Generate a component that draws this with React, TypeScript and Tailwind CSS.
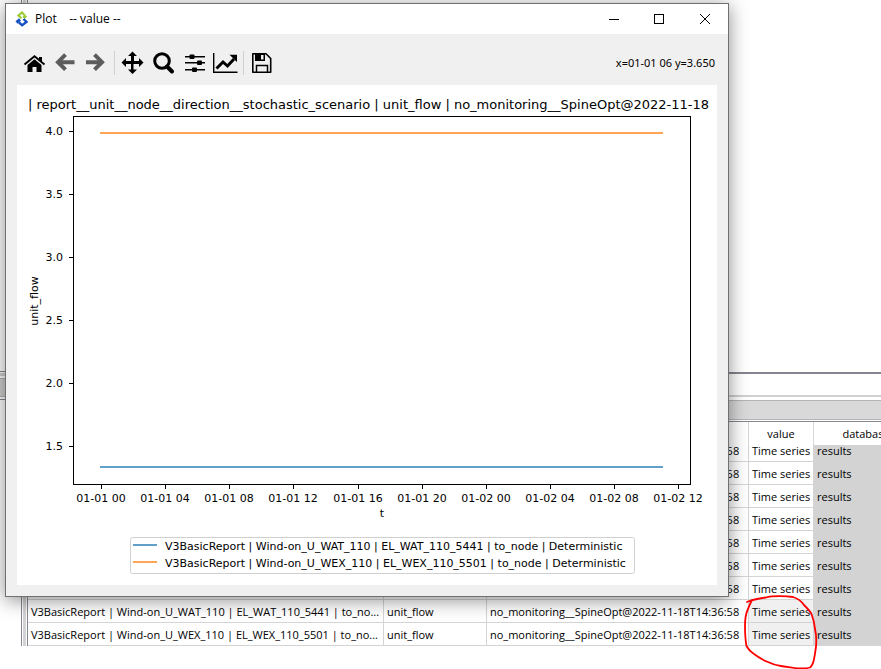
import React from 'react';

const rowCount = 9;

const visibleNames: Record<number, string> = {
  7: 'V3BasicReport | Wind-on_U_WAT_110 | EL_WAT_110_5441 | to_no...',
  8: 'V3BasicReport | Wind-on_U_WEX_110 | EL_WEX_110_5501 | to_no...',
};

const xTicks = [
  { x: 84, label: '01-01 00' },
  { x: 148, label: '01-01 04' },
  { x: 212, label: '01-01 08' },
  { x: 276, label: '01-01 12' },
  { x: 341, label: '01-01 16' },
  { x: 405, label: '01-01 20' },
  { x: 469, label: '01-02 00' },
  { x: 533, label: '01-02 04' },
  { x: 597, label: '01-02 08' },
  { x: 661, label: '01-02 12' },
];

const yTicks = [
  { y: 46, label: '4.0' },
  { y: 109, label: '3.5' },
  { y: 172, label: '3.0' },
  { y: 235, label: '2.5' },
  { y: 298, label: '2.0' },
  { y: 361, label: '1.5' },
];

const ToolButton: React.FC<{ label: string; disabled?: boolean; children: React.ReactNode }> = ({
  label,
  disabled,
  children,
}) => (
  <button
    type="button"
    aria-label={label}
    disabled={disabled}
    className="flex h-8 w-[31px] items-center justify-center text-black disabled:text-[#5c5c5c]"
  >
    <svg width="25" height="24" viewBox="0 0 25 24" fill="currentColor">
      {children}
    </svg>
  </button>
);

const Toolbar = () => (
  <div className="flex h-[51px] items-center bg-[#f0f0f0] pt-[6px] pr-[13px] pl-[13px]">
    <ToolButton label="Home">
      <path d="M2.5 13.5 12.5 5.2l10 8.3" fill="none" stroke="currentColor" strokeWidth="1.9" />
      <path d="M17 6h3v6l-3-2.5z" />
      <path d="M5.5 14 12.5 8.2l7 5.8v7h-5v-5h-4v5h-5z" />
    </ToolButton>
    <ToolButton label="Back" disabled>
      <path d="M12.5 3.7 5 11.2l7.5 7.5M5.5 11.2H21.5" fill="none" stroke="currentColor" strokeWidth="4" />
    </ToolButton>
    <ToolButton label="Forward" disabled>
      <path d="M10.5 3.7l7.5 7.5-7.5 7.5M17.5 11.2H2" fill="none" stroke="currentColor" strokeWidth="4" />
    </ToolButton>
    <div className="flex h-6 w-[5px] justify-center">
      <div className="w-px bg-[#d0d0d0]" />
    </div>
    <ToolButton label="Pan">
      <path d="M12.5 .5l4.500 4.500h-3v5h5V7L23.500 11.500 19 16v-3h-5.500v5.500h3.500L12.500 23 8 18.500h3V13H6v3L1.500 11.500 6 7v3h5V5H8z" />
    </ToolButton>
    <ToolButton label="Zoom">
      <circle cx="11" cy="10" r="7.3" fill="none" stroke="currentColor" strokeWidth="3" />
      <path d="M16 15.500l5 5" stroke="currentColor" strokeWidth="4" strokeLinecap="round" />
    </ToolButton>
    <ToolButton label="Subplots">
      <path d="M3 5h20v1.500H3zM3 11h20v1.500H3zM3 18h20v1.500H3z" />
      <rect x="7.500" y="3.500" width="5" height="4.500" rx="1" />
      <rect x="15" y="9.500" width="5" height="4.500" rx="1" />
      <rect x="10" y="16.500" width="5" height="4.500" rx="1" />
    </ToolButton>
    <ToolButton label="Customize">
      <path d="M.7 2v19.200H24.500" fill="none" stroke="currentColor" strokeWidth="1.4" />
      <path d="M3.500 17.500l6.500-6.500 4.500 4 6.500-7" fill="none" stroke="currentColor" strokeWidth="3" />
      <path d="M16.500 3.800H24V11z" />
    </ToolButton>
    <div className="flex h-6 w-[5px] justify-center">
      <div className="w-px bg-[#d0d0d0]" />
    </div>
    <ToolButton label="Save">
      <path
        d="M3.800 2.800H17l4.700 4.700v13.700H3.800z"
        fill="none"
        stroke="currentColor"
        strokeWidth="1.6"
        strokeLinejoin="round"
      />
      <path d="M6 3h10v7H6zM12 4v4.500h2.500V4z" fillRule="evenodd" />
      <path d="M7.500 21v-6.500h11V21" fill="none" stroke="currentColor" strokeWidth="1.5" />
    </ToolButton>
    <span className="ml-auto font-['Noto_Sans',sans-serif] text-[11px] leading-4 text-black">x=01-01 06 y=3.650</span>
  </div>
);

const Plot = () => (
  <svg
    viewBox="0 0 700 500"
    className="block w-full bg-white font-['DejaVu_Sans',sans-serif] text-[11px]"
    role="img"
    aria-label="unit_flow over t"
  >
    <text x="11" y="24" fontSize="13">
      | report__unit__node__direction__stochastic_scenario | unit_flow | no_monitoring__SpineOpt@2022-11-18
    </text>
    <rect x="56.5" y="31.5" width="617" height="368" fill="none" stroke="#000" />
    <path d="M83 48h563" stroke="#ffa556" strokeWidth="2" />
    <path d="M83 382h563" stroke="#629fca" strokeWidth="2" />
    {yTicks.map((t) => (
      <g key={t.label}>
        <path d={`M52 ${t.y + 0.5}h4`} stroke="#000" />
        <text x="46" y={t.y + 4} textAnchor="end">
          {t.label}
        </text>
      </g>
    ))}
    {xTicks.map((t) => (
      <g key={t.label}>
        <path d={`M${t.x + 0.5} 400v4`} stroke="#000" />
        <text x={t.x} y="417" textAnchor="middle">
          {t.label}
        </text>
      </g>
    ))}
    <text x="365" y="432" textAnchor="middle">
      t
    </text>
    <text transform="translate(21 216) rotate(-90)" textAnchor="middle">
      unit_flow
    </text>
    <rect x="113.5" y="452.5" width="504" height="36" rx="2" fill="#fff" stroke="#d0d0d0" />
    <path d="M116 460h24" stroke="#629fca" strokeWidth="2" />
    <path d="M116 477h24" stroke="#ffa556" strokeWidth="2" />
    <text x="148" y="465">
      V3BasicReport | Wind-on_U_WAT_110 | EL_WAT_110_5441 | to_node | Deterministic
    </text>
    <text x="148" y="482">
      V3BasicReport | Wind-on_U_WEX_110 | EL_WEX_110_5501 | to_node | Deterministic
    </text>
  </svg>
);

const TitleBar = () => (
  <div className="flex h-[30px] items-center bg-white pl-[9px]">
    <svg width="14" height="18" viewBox="0 0 14 18">
      <g fill="none" stroke="#9acb34" strokeWidth="2.2">
        <path d="M9.500 5L7 2.500 3.500 5.500 6.500 8.200" />
        <path d="M8.500 8L11 5.500" strokeWidth="3" />
      </g>
      <g fill="none" stroke="#1450c4" strokeWidth="2.4">
        <path d="M8.500 9l3 3-4.300 3.300-3.200-2.800" />
        <path d="M1.500 12.500L5 9.500" strokeWidth="3" />
      </g>
    </svg>
    <span className="ml-[6px] text-xs whitespace-pre">Plot    -- value --</span>
    <div className="ml-auto flex">
      <button type="button" aria-label="Minimize" className="flex h-[30px] w-[44px] items-center justify-center">
        <svg width="10" height="10" viewBox="0 0 10 10" stroke="#000">
          <path d="M0 5.500h10" />
        </svg>
      </button>
      <button type="button" aria-label="Maximize" className="flex h-[30px] w-[46px] items-center justify-center">
        <svg width="10" height="10" viewBox="0 0 10 10" fill="none" stroke="#000">
          <rect x=".5" y=".5" width="9" height="9" />
        </svg>
      </button>
      <button type="button" aria-label="Close" className="flex h-[30px] w-[46px] items-center justify-center">
        <svg width="10" height="10" viewBox="0 0 10 10" stroke="#000">
          <path d="M0 0l10 10M10 0L0 10" />
        </svg>
      </button>
    </div>
  </div>
);

const PlotWindow = () => (
  <div className="absolute top-[3px] left-[5px] w-[724px] border border-[#707070] bg-[#f0f0f0] shadow-[0_3px_18px_rgba(0,0,0,0.45)]">
    <TitleBar />
    <Toolbar />
    <div className="px-[11px] pb-[11px]">
      <Plot />
    </div>
  </div>
);

const ResultsTable = () => (
  <div className="overflow-hidden">
    <table className="w-[890px] table-fixed border-separate border-spacing-0 text-[11px] leading-4">
      <colgroup>
        <col className="w-[356px]" />
        <col className="w-[103px]" />
        <col className="w-[262px]" />
        <col className="w-[65px]" />
        <col className="w-[104px]" />
      </colgroup>
      <thead>
        <tr className="h-[23px]">
          <th className="border-r border-[#d8d8d8]" />
          <th className="border-r border-[#d8d8d8]" />
          <th className="border-r border-[#d8d8d8]" />
          <th className="border-r border-[#d8d8d8] p-0 font-normal">value</th>
          <th className="p-0 font-normal">database</th>
        </tr>
      </thead>
      <tbody>
        {Array.from({ length: rowCount }, (_, i) => {
          const height = i === 0 ? 'h-[17px] align-top leading-3' : 'h-[23px] pt-[2px]';
          const cell = `${height} overflow-hidden border-r border-b border-[#d4d4d4] pl-[3px] whitespace-nowrap`;
          return (
            <tr key={i}>
              <td className={cell}>{visibleNames[i]}</td>
              <td className={cell}>{visibleNames[i] && 'unit_flow'}</td>
              <td className={cell}>no_monitoring__SpineOpt@2022-11-18T14:36:58</td>
              <td className={i > 6 ? `${cell} bg-[#f0f0f0]` : cell}>Time series</td>
              <td className={`${height} border-b border-[#d4d4d4] bg-[#d3d3d3] pl-[3px]`}>results</td>
            </tr>
          );
        })}
      </tbody>
    </table>
  </div>
);

const Splitter = () => (
  <div className="w-[7px] shrink-0 border-x border-[#828790] bg-white px-px">
    <div className="h-full bg-[#d3d3d3]" />
  </div>
);

export default function App() {
  return (
    <div className="relative min-h-screen overflow-hidden bg-white font-['Open_Sans','Noto_Sans',sans-serif] text-black">
      <div className="flex">
        <div className="w-[21px] shrink-0">
          <div className="h-[371px]" />
          <div className="h-[5px] border-t border-[#828790] pt-px">
            <div className="h-[3px] bg-[#d0d0d0]" />
          </div>
          <div className="mt-[2px] h-[19px] border-y border-[#b0b0b0] bg-[#d0d0d0]" />
          <div className="mt-[2px] border-t border-[#828790]" />
        </div>
        <div className="min-w-0 flex-1">
          <div className="flex h-[372px]">
            <Splitter />
          </div>
          <div className="h-[25px] border-t-2 border-b-2 border-t-[#85858f] border-b-[#d0d0d0]" />
          <div className="mt-[3px] h-5 border-y border-[#b4b4b4] bg-[#d9d9d9]" />
          <div className="mt-px flex">
            <Splitter />
            <div className="min-w-0 flex-1 border-t border-[#828790]">
              <ResultsTable />
            </div>
          </div>
        </div>
      </div>

      <PlotWindow />

      <svg
        className="absolute top-[590px] left-[739px]"
        width="84"
        height="79"
        viewBox="0 0 84 79"
        fill="none"
        stroke="#ff0000"
        strokeWidth="1.8"
        strokeLinecap="round"
        strokeLinejoin="round"
      >
        <path d="M8 12l5-2-1 2M11 11c5-2 12-3 16-3.500 6-2 21-1.500 27-.5 6 2 9 5 11 8 4 4 6 6 7.500 9 2 5 3 10 3.500 15 1.500 6 1.500 12 1 18-1 6-1.500 12-3 16-1 2-2 4-3 4.500-3 1-7 1-11 1-6-.5-13-2-18-2.500-5-.5-9-2-13-4-5-2-10-5-14-8-3-2-6-5-7.500-8-1.500-8-1.500-15-1.500-20 0-7 1-13 3-17 1-3 2-5 3-7" />
      </svg>
    </div>
  );
}
